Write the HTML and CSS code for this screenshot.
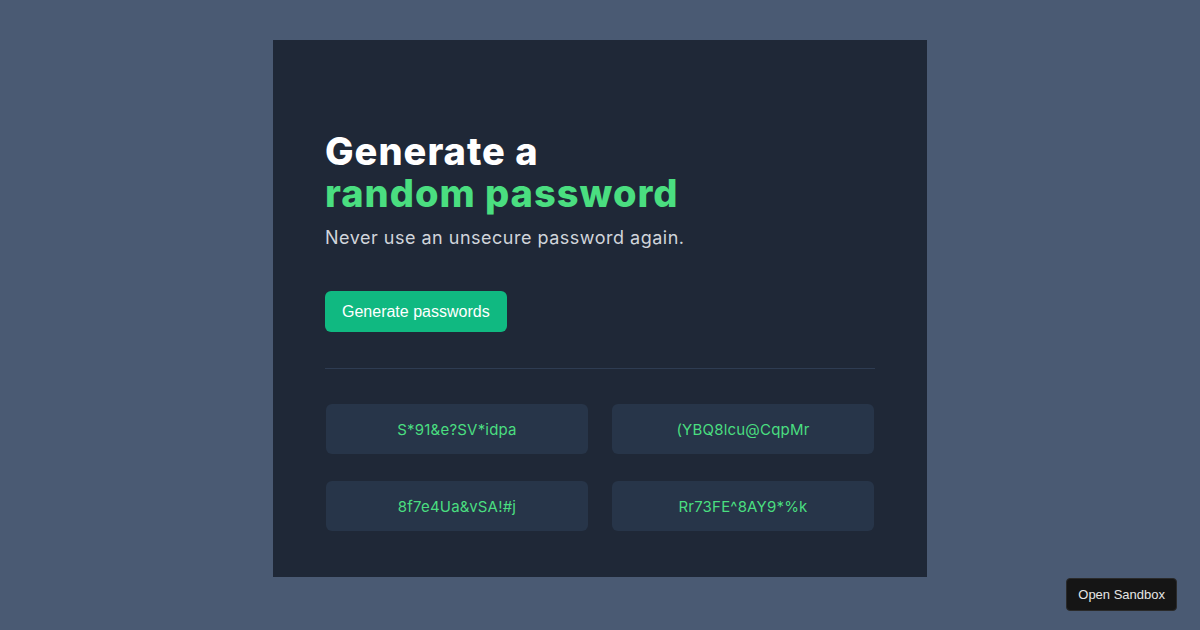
FILE: index.html
```html
<!DOCTYPE html>
<html lang="en">
<head>
    <meta charset="UTF-8">
    <meta name="viewport" content="width=device-width, initial-scale=1.0">
    <title>Password Generator</title>
    <link rel="stylesheet" href="styles.css">
</head>
<body>
    <div class="container">
        <h1>Generate a<br><span class="accent">random password</span></h1>
        <p class="subtitle">Never use an unsecure password again.</p>

        <button class="generate-btn">Generate passwords</button>

        <hr class="divider">

        <div class="passwords">
            <div class="password-box">S*91&amp;e?SV*idpa</div>
            <div class="password-box">(YBQ8lcu@CqpMr</div>
            <div class="password-box">8f7e4Ua&amp;vSA!#j</div>
            <div class="password-box">Rr73FE^8AY9*%k</div>
        </div>
    </div>

    <a class="sandbox-btn">Open Sandbox</a>
</body>
</html>
```

FILE: styles.css
```css
body {
    font-family: 'Inter', 'Noto Sans', sans-serif;
    background-color: #4a5a73;
    margin: 0;
    padding: 40px 0 0;
    height: 100vh;
    box-sizing: border-box;
    display: flex;
    justify-content: center;
    align-items: flex-start;
}

.container {
    background-color: #1f2837;
    width: 654px;
    padding: 90px 52px 46px;
    box-sizing: border-box;
}

h1 {
    font-size: 38px;
    line-height: 42px;
    font-weight: 800;
    letter-spacing: 1px;
    color: #fff;
    margin: 0;
}

.accent {
    color: #4ade80;
}

.subtitle {
    font-size: 18px;
    color: #d1d5db;
    margin: 13px 0 0;
    letter-spacing: 0.5px;
}

.generate-btn {
    margin-top: 43px;
    padding: 0 17px;
    height: 41px;
    background-color: #10b981;
    color: #fff;
    font-family: 'Liberation Sans', Arial, sans-serif;
    font-size: 16px;
    border: none;
    border-radius: 6px;
    cursor: pointer;
}

.divider {
    border: none;
    border-top: 1px solid #2e3c52;
    margin: 36px 0 35px;
}

.passwords {
    display: grid;
    grid-template-columns: 1fr 1fr;
    column-gap: 24px;
    row-gap: 27px;
    padding: 0 1px;
}

.password-box {
    background-color: #273549;
    border-radius: 6px;
    height: 50px;
    display: flex;
    align-items: center;
    justify-content: center;
    color: #4ade80;
    font-size: 15px;
    letter-spacing: 0.2px;
}

.sandbox-btn {
    position: fixed;
    right: 23px;
    bottom: 19px;
    background-color: #151515;
    color: #e5e5e5;
    font-family: 'Liberation Sans', Arial, sans-serif;
    font-size: 13px;
    padding: 8px 11px;
    border: 1px solid #2a2a2a;
    border-radius: 4px;
}
```
